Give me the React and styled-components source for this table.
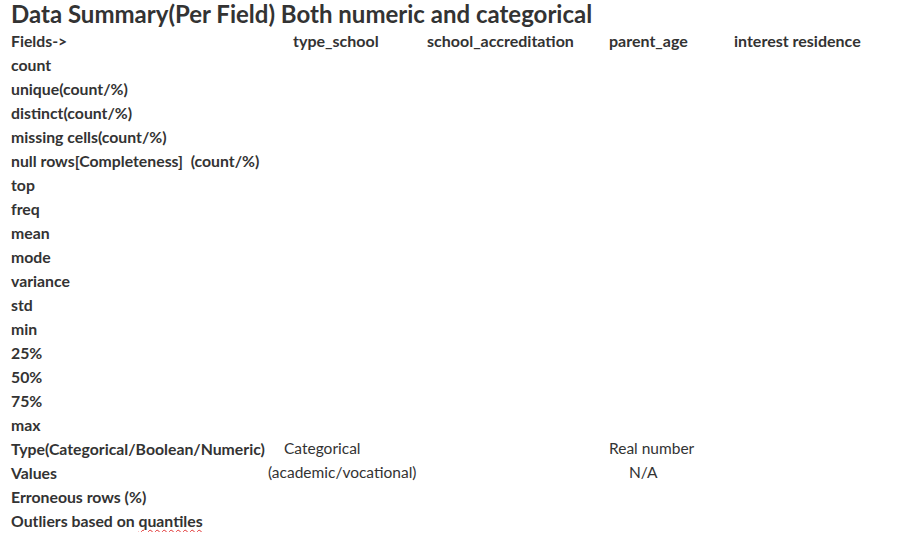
import React from 'react';
import styled, { createGlobalStyle } from 'styled-components';

const GlobalStyle = createGlobalStyle`
  body {
    margin: 0;
    background: #fff;
    font-family: Lato, "Liberation Sans", sans-serif;
    color: #333;
  }
`;

const Page = styled.div`
  padding: 0 11px;
`;

const Title = styled.h1`
  margin: 0;
  font-size: 24px;
  font-weight: 700;
  line-height: 28px;
  white-space: nowrap;
`;

const Table = styled.div`
  display: grid;
  grid-template-columns: 257px 159px 182px 125px auto;
  grid-auto-rows: 24px;
  align-items: center;
`;

const Label = styled.div`
  font-size: 15.8px;
  font-weight: 700;
  white-space: pre;
`;

const Cell = styled.div`
  font-size: ${(p) => (p.$head ? 16 : 15.5)}px;
  font-weight: ${(p) => (p.$head ? 700 : 400)};
  padding-left: ${(p) => p.$indent || 0}px;
  white-space: nowrap;
`;

const Squiggle = styled.span`
  text-decoration: underline wavy #e03030;
  text-decoration-thickness: 1.2px;
  text-underline-offset: 2px;
`;

const labels = [
  'count',
  'unique(count/%)',
  'distinct(count/%)',
  'missing cells(count/%)',
  'null rows[Completeness]  (count/%)',
  'top',
  'freq',
  'mean',
  'mode',
  'variance',
  'std',
  'min',
  '25%',
  '50%',
  '75%',
  'max',
];

function EmptyCells() {
  return (
    <>
      <Cell />
      <Cell />
      <Cell />
      <Cell />
    </>
  );
}

export default function App() {
  return (
    <>
      <GlobalStyle />
      <Page>
        <Title>Data Summary(Per Field) Both numeric and categorical</Title>
        <Table>
          <Label>Fields-&gt;</Label>
          <Cell $head $indent={25}>type_school</Cell>
          <Cell $head>school_accreditation</Cell>
          <Cell $head>parent_age</Cell>
          <Cell $head>interest residence</Cell>

          {labels.map((l) => (
            <React.Fragment key={l}>
              <Label>{l}</Label>
              <EmptyCells />
            </React.Fragment>
          ))}

          <Label>Type(Categorical/Boolean/Numeric)</Label>
          <Cell $indent={16}>Categorical</Cell>
          <Cell />
          <Cell>Real number</Cell>
          <Cell />

          <Label>Values</Label>
          <Cell>(academic/vocational)</Cell>
          <Cell />
          <Cell $indent={20}>N/A</Cell>
          <Cell />

          <Label>Erroneous rows (%)</Label>
          <EmptyCells />

          <Label>
            Outliers based on <Squiggle>quantiles</Squiggle>
          </Label>
          <EmptyCells />
        </Table>
      </Page>
    </>
  );
}
